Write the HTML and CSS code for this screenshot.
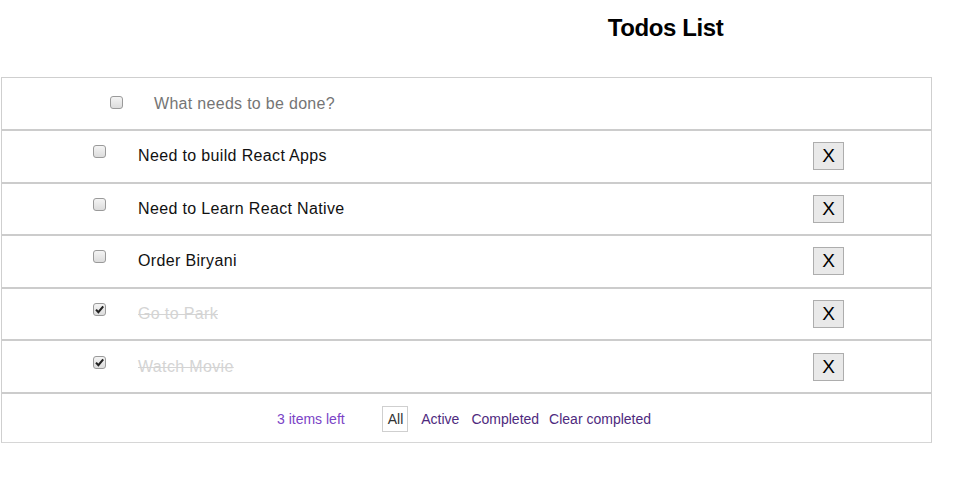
FILE: index.html
```html
<!DOCTYPE html>
<html lang="en">
<head>
<meta charset="utf-8">
<title>Todos List</title>
<link rel="stylesheet" href="styles.css">
</head>
<body>
<header class="page-head">
  <h1 class="title">Todos List</h1>
</header>
<section class="todoapp">
  <div class="new-row">
    <span class="box"></span>
    <span class="placeholder">What needs to be done?</span>
  </div>
  <ul class="list">
    <li class="item">
      <span class="box"></span>
      <span class="label">Need to build React Apps</span>
      <button class="destroy">X</button>
    </li>
    <li class="item">
      <span class="box"></span>
      <span class="label">Need to Learn React Native</span>
      <button class="destroy">X</button>
    </li>
    <li class="item">
      <span class="box"></span>
      <span class="label">Order Biryani</span>
      <button class="destroy">X</button>
    </li>
    <li class="item done">
      <span class="box"><svg viewBox="0 0 13 13" width="13" height="13"><path d="M3 6.6 L5.4 9.2 L10.2 3.4" fill="none" stroke="#222" stroke-width="2.1"/></svg></span>
      <span class="label">Go to Park</span>
      <button class="destroy">X</button>
    </li>
    <li class="item done">
      <span class="box"><svg viewBox="0 0 13 13" width="13" height="13"><path d="M3 6.6 L5.4 9.2 L10.2 3.4" fill="none" stroke="#222" stroke-width="2.1"/></svg></span>
      <span class="label">Watch Movie</span>
      <button class="destroy">X</button>
    </li>
  </ul>
  <footer class="footer">
    <span class="count">3 items left</span>
    <nav class="filters">
      <a class="filter selected">All</a>
      <a class="filter">Active</a>
      <a class="filter">Completed</a>
      <a class="filter clear">Clear completed</a>
    </nav>
  </footer>
</section>
</body>
</html>
```
FILE: styles.css
```css
* { box-sizing: border-box; }
html, body { margin: 0; padding: 0; background: #fff; }
body {
  font-family: "Liberation Sans", Arial, sans-serif;
  color: #000;
  width: 975px;
}
.page-head {
  padding: 14px 0 0 356px;
  height: 77px;
}
.title {
  margin: 0;
  font-size: 24px;
  font-weight: bold;
  text-align: center;
  line-height: 27px;
  letter-spacing: -0.4px;
}
.todoapp {
  margin-left: 1px;
  width: 931px;
  border: 1px solid #cfcfcf;
  border-bottom-color: #d6d6d6;
}
.new-row {
  height: 51px;
  display: flex;
  align-items: center;
  padding-left: 108px;
}
.new-row .box { margin-bottom: 3px; }
.placeholder {
  margin-left: 31px;
  font-size: 16px;
  color: #757575;
  padding-top: 1px;
  letter-spacing: 0.3px;
}
.list { list-style: none; margin: 0; padding: 0; }
.item {
  height: 52.6px;
  border-top: 2px solid #cccccc;
  display: flex;
  align-items: center;
  padding-left: 91px;
  padding-right: 87px;
}
.box {
  width: 13px;
  height: 13px;
  flex: none;
  border: 1px solid #9a9a9a;
  border-radius: 3px;
  background: linear-gradient(#f4f4f4, #dcdcdc);
  margin-bottom: 9px;
  position: relative;
  overflow: visible;
}
.box svg { position: absolute; left: -1px; top: -1px; }
.label {
  flex: 1;
  margin-left: 32px;
  font-size: 16px;
  color: #111;
  letter-spacing: 0.35px;
}
.done .label {
  color: #d4d4d4;
  text-decoration: line-through;
}
.destroy {
  width: 31px;
  height: 28px;
  padding: 0;
  font-family: "Liberation Sans", Arial, sans-serif;
  font-size: 19px;
  line-height: 26px;
  color: #000;
  background: #e9e9e9;
  border: 1px solid #adadad;
  border-radius: 0;
}
.footer {
  height: 50px;
  border-top: 2px solid #cccccc;
  display: flex;
  align-items: center;
  padding-left: 275px;
  font-size: 14px;
  padding-top: 3px;
}
.count { color: #7b44c6; }
.filters {
  display: flex;
  align-items: center;
  gap: 12px;
  margin-left: 37px;
}
.filter { color: #4e2a7e; cursor: pointer; }
.filter.selected {
  color: #333;
  border: 1px solid #cfcfcf;
  padding: 4px 4px 4px 5px;
  height: 26px;
  line-height: 16px;
  margin-right: 1px;
}
.filter.clear { margin-left: -2px; }
```
